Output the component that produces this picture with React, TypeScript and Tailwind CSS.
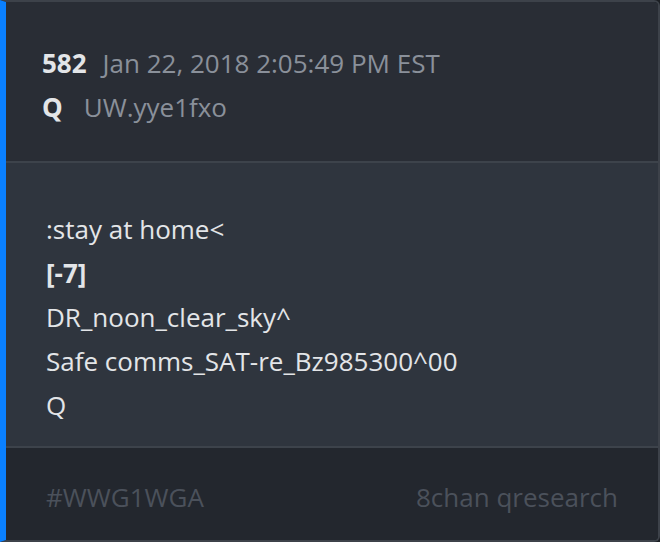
export default function App() {
  return (
    <div className="w-[660px] h-[542px] bg-[#1b1e23] font-['Open_Sans',sans-serif]">
      <div className="h-full flex flex-col border-2 border-[#3d424a] border-l-[6px] border-l-[#0a80ff] rounded-r-md overflow-hidden">
        <div className="h-[161px] shrink-0 bg-[#292d35] px-[36px] pt-[44px] border-b-2 border-[#3d434b]">
          <div className="flex items-baseline gap-[16px] text-[26px] leading-[34px]">
            <span className="font-bold text-[#e3e5e8]">582</span>
            <span className="text-[#8a909a]">Jan 22, 2018 2:05:49 PM EST</span>
          </div>
          <div className="flex items-baseline gap-[21px] text-[26px] leading-[34px] mt-[10px]">
            <span className="font-bold text-[#e3e5e8]">Q</span>
            <span className="text-[#8a909a]">UW.yye1fxo</span>
          </div>
        </div>
        <div className="h-[285px] shrink-0 bg-[#2f353e] px-[40px] pt-[44px] text-[26px] leading-[44px] text-[#e3e5e8] border-b-2 border-[#3d434b]">
          <div>:stay at home&lt;</div>
          <div className="font-bold">[-7]</div>
          <div>DR_noon_clear_sky^</div>
          <div>Safe comms_SAT-re_Bz985300^00</div>
          <div>Q</div>
        </div>
        <div className="flex-1 bg-[#23272e] px-[40px] pt-[6px] flex items-center justify-between text-[26px] text-[#4b515b]">
          <span>#WWG1WGA</span>
          <span>8chan qresearch</span>
        </div>
      </div>
    </div>
  );
}
